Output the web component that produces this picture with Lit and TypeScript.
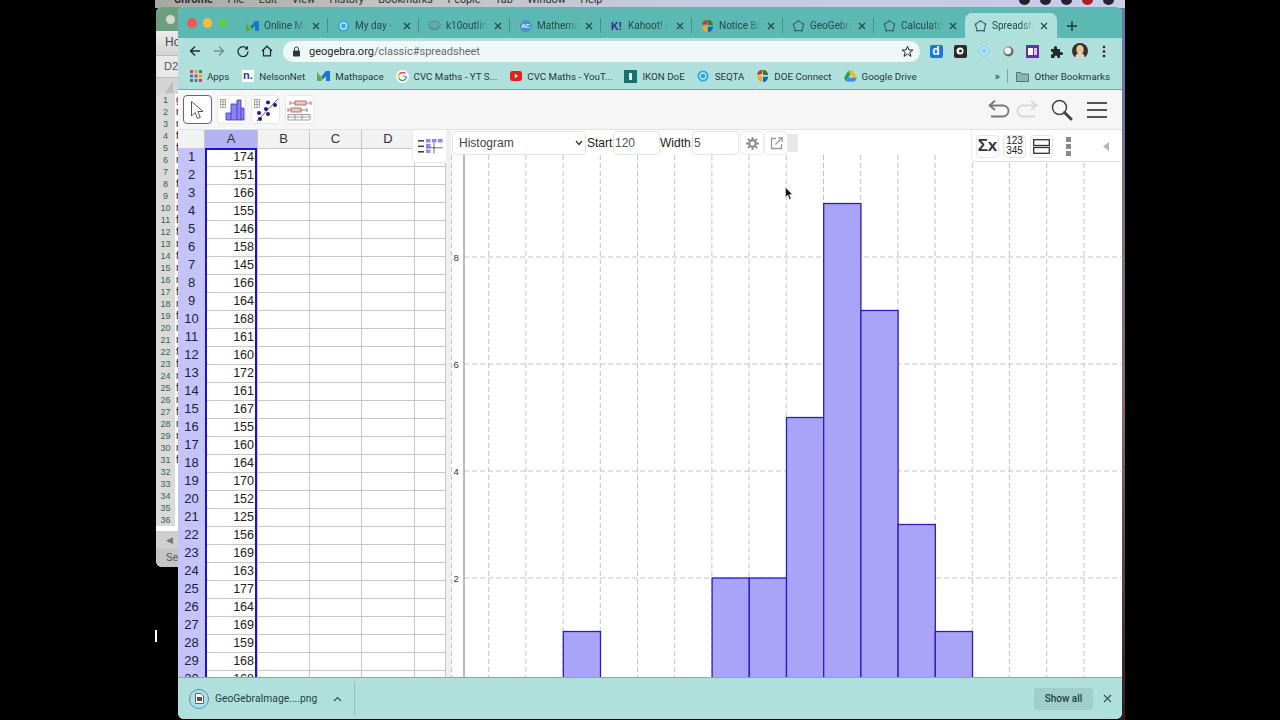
import { LitElement, html, css, svg } from "lit";
import { customElement } from "lit/decorators.js";

const VALUES = [174,151,166,155,146,158,145,166,164,168,161,160,172,161,167,155,160,164,170,152,125,156,169,163,177,164,169,159,168,168];
const XL_LETTERS = "grrffrrfrrffrfrrfrfrrffrfrfrrrf";

const pentagon = svg`<svg width="14" height="14" viewBox="0 0 14 14"><path d="M7 1.500 12.500 5 10.800 12 3.400 12 1.500 5.200Z" fill="none" stroke="#3f5f78" stroke-width="1.200"/><circle cx="7" cy="1.800" r="1" fill="#3f5f78"/><circle cx="12.300" cy="5" r="1" fill="#3f5f78"/><circle cx="1.700" cy="5.200" r="1" fill="#3f5f78"/><circle cx="3.500" cy="12" r="1" fill="#3f5f78"/><circle cx="10.800" cy="12" r="1" fill="#3f5f78"/></svg>`;
const msIcon = svg`<svg width="13" height="12" viewBox="0 0 13 12"><path d="M0 11V2l4 5V11Z" fill="#4caf50"/><path d="M4 7 9 1h4v10H9V6L6.500 9Z" fill="#1976d2"/><path d="M0 2 4 7 6.500 9 4 11Z" fill="#7cb342"/></svg>`;
const seqta = svg`<svg width="12" height="12" viewBox="0 0 12 12"><circle cx="6" cy="6" r="5.500" fill="#29a8df"/><circle cx="6" cy="6" r="3" fill="none" stroke="#bfe9f7" stroke-width="1.300"/></svg>`;
const doe = svg`<svg width="13" height="14" viewBox="0 0 13 14"><path d="M6.500 1C3 1 1 3 1.500 6L6 5Z" fill="#d32f2f"/><path d="M7 1c3 0 5 2 5 5L7 6Z" fill="#2e7d32"/><path d="M1.500 7 6.500 7 6 13C3 13 1.500 10 1.500 7Z" fill="#f9a825"/><path d="M7 8l5-.5C12 11 10 13 7 13Z" fill="#1565c0"/></svg>`;

const tabs = [
  { t: "Online Mathspace", i: msIcon },
  { t: "My day - To Do", i: svg`<svg width="14" height="14" viewBox="0 0 14 14"><circle cx="7" cy="7" r="6" fill="#35a6e8"/><circle cx="7" cy="7" r="3.300" fill="none" stroke="#cdeefb" stroke-width="1.300"/></svg>` },
  { t: "k10outline", i: svg`<svg width="14" height="12" viewBox="0 0 14 12"><ellipse cx="7" cy="5" rx="6.300" ry="4.200" fill="#6aa9a7" stroke="#4c8d8b"/><path d="M3 6v3c2 1.500 6 1.500 8 0V6" fill="none" stroke="#4c8d8b"/></svg>` },
  { t: "Mathematics", i: svg`<svg width="14" height="14" viewBox="0 0 14 14"><circle cx="7" cy="7" r="6.500" fill="#3d96d8"/><path d="M1 10A6.500 6.500 0 0 1 3 2" fill="none" stroke="#d99a4a" stroke-width="1.200"/><text x="7" y="9.500" font-size="6.500" font-weight="700" text-anchor="middle" fill="#fff" font-family="Liberation Sans">AC</text></svg>` },
  { t: "Kahoot! - ", i: html`<span class="kahoot">K!</span>` },
  { t: "Notice Board", i: doe },
  { t: "GeoGebra", i: pentagon },
  { t: "Calculator", i: pentagon },
];

const bookmarks = [
  { t: "Apps", i: svg`<svg width="12" height="12" viewBox="0 0 12 12">${[["#d9453a",0,0],["#e8a32c",4.500,0],["#3b8a46",9,0],["#3a78d8",0,4.500],["#d9453a",4.500,4.500],["#e8a32c",9,4.500],["#3b8a46",0,9],["#3a78d8",4.500,9],["#d9453a",9,9]].map((d) => svg`<rect x="${d[1]}" y="${d[2]}" width="3" height="3" fill="${d[0]}"/>`)}</svg>` },
  { t: "NelsonNet", i: html`<span class="nelson">n.</span>` },
  { t: "Mathspace", i: msIcon },
  { t: "CVC Maths - YT S...", i: svg`<svg width="13" height="13" viewBox="0 0 13 13"><circle cx="6.500" cy="6.500" r="6.500" fill="#fff"/><path d="M10.300 6.800H6.800V5.700h3.500" fill="#4285f4"/><path d="M9.400 3.600A4 4 0 0 0 3.200 4.500" fill="none" stroke="#ea4335" stroke-width="1.400"/><path d="M3 4.400a4 4 0 0 0 0 4" fill="none" stroke="#fbbc05" stroke-width="1.400"/><path d="M3 8.400a4 4 0 0 0 6.400.8" fill="none" stroke="#34a853" stroke-width="1.400"/><path d="M9.300 9.300a3.800 3.800 0 0 0 1-2.600" fill="none" stroke="#4285f4" stroke-width="1.400"/></svg>` },
  { t: "CVC Maths - YouT...", i: svg`<svg width="12" height="10" viewBox="0 0 12 10"><rect width="12" height="10" rx="2.200" fill="#e3201b"/><path d="M4.800 2.800 8 5 4.800 7.200Z" fill="#fff"/></svg>` },
  { t: "IKON DoE", i: svg`<svg width="13" height="13" viewBox="0 0 13 13"><rect width="13" height="13" fill="#19716f"/><rect x="5" y="3" width="3" height="7" fill="#e8f4f2"/></svg>` },
  { t: "SEQTA", i: seqta },
  { t: "DOE Connect", i: doe },
  { t: "Google Drive", i: svg`<svg width="14" height="12" viewBox="0 0 14 12"><path d="M4.700 0H9.300L14 8H9.400Z" fill="#f6bb18"/><path d="M4.700 0 0 8l2.300 4L7 4Z" fill="#1fa463"/><path d="M2.300 12H11.700L14 8H4.700Z" fill="#4285f4"/></svg>` },
];

const toolbarExt = [
  html`<span class="ext-d">d</span>`,
  svg`<svg width="13" height="13" viewBox="0 0 13 13"><rect width="13" height="13" rx="2" fill="#2b2b2b"/><circle cx="6" cy="6" r="3.500" fill="#fff"/><circle cx="6.500" cy="6" r="1.500" fill="#2b2b2b"/></svg>`,
  svg`<svg width="14" height="14" viewBox="0 0 14 14"><rect x="2.500" y="2.500" width="9" height="9" transform="rotate(45 7 7)" fill="#7fd0f5"/><rect x="4.200" y="4.200" width="5.600" height="5.600" transform="rotate(45 7 7)" fill="none" stroke="#e8f8ff"/></svg>`,
  svg`<svg width="13" height="13" viewBox="0 0 13 13"><circle cx="6.500" cy="6.500" r="5" fill="#666"/><circle cx="5.800" cy="5.800" r="3.500" fill="#eee"/></svg>`,
  svg`<svg width="13" height="13" viewBox="0 0 13 13"><rect width="13" height="13" fill="#6a2bb0"/><rect x="2" y="3" width="5" height="7" fill="#fff"/><rect x="8" y="3" width="3" height="7" fill="#d9c4f0"/></svg>`,
  svg`<svg width="13" height="13" viewBox="0 0 13 13"><path d="M1 4h3V2.500a1.500 1.500 0 0 1 3 0V4h3v3h1.500a1.500 1.500 0 0 1 0 3H10v3H7.500v-1a1.500 1.500 0 0 0-3 0v1H1V9.500h.5a1.500 1.500 0 0 0 0-3H1Z" fill="#1d2b2a"/></svg>`,
  svg`<svg width="16" height="16" viewBox="0 0 16 16"><circle cx="8" cy="8" r="8" fill="#3a2f28"/><ellipse cx="8" cy="6.500" rx="3.600" ry="4.500" fill="#e4c59a"/><path d="M3 16c0-4 2-6 5-6s5 2 5 6Z" fill="#d8d4cc"/></svg>`,
  svg`<svg width="4" height="13" viewBox="0 0 4 13"><circle cx="2" cy="2" r="1.300" fill="#223"/><circle cx="2" cy="6.500" r="1.300" fill="#223"/><circle cx="2" cy="11" r="1.300" fill="#223"/></svg>`,
];

const BAR_LEFT = 112.3;
const UNIT_X = 37.2;
const bars = [{ k: 0, h: 1 }, { k: 4, h: 2 }, { k: 5, h: 2 }, { k: 6, h: 5 }, { k: 7, h: 9 }, { k: 8, h: 7 }, { k: 9, h: 3 }, { k: 10, h: 1 }];
const Y0 = 555;
const UNIT_Y = 53.5;

@customElement("app-root")
export class AppRoot extends LitElement {
  static styles = css`
    :host { display: block; width: 1280px; height: 720px; position: relative; overflow: hidden; background: #000; font-family: "Liberation Sans", Arial, sans-serif; }
    .menubar { position: absolute; left: 155px; top: 0; width: 970px; height: 8px; overflow: hidden; background: linear-gradient(90deg, #a9a7a2 0%, #c7c3c0 25%, #c9c8e2 55%, #c8cde8 100%); }
    .menu-items { display: flex; font: 400 10.800px "Roboto", sans-serif; color: #2b2b30; margin-top: -9px; padding-left: 19px; height: 16px; align-items: center; white-space: nowrap; }
    .menu-items span { margin-right: 14.500px; }
    .menu-items .appname { font-weight: 700; font-size: 11px; }
    .tray { position: absolute; top: -5px; left: 864px; display: flex; gap: 10px; align-items: center; }
    .tray i { display: block; width: 11px; height: 10px; border-radius: 50%; background: #23232e; }
    .tray i.red { background: #b31b2b; }
    .strip { position: absolute; left: 1120px; top: 8px; width: 5px; height: 712px; background: linear-gradient(180deg, #6b78a8 0%, #77708a 25%, #8a6a70 55%, #2c1c22 100%); }
    .spot { position: absolute; left: 155px; top: 630px; width: 2px; height: 12px; background: #fff; }

    .excel { position: absolute; left: 156px; top: 7px; width: 30px; height: 560px; border-radius: 6px 0 0 6px; overflow: hidden; background: #dcdcdc; display: flex; flex-direction: column; }
    .xl-title { height: 24px; background: #6b9f80; display: flex; align-items: center; padding-left: 10px; flex: none; }
    .xl-title i { display: block; width: 9px; height: 9px; border-radius: 50%; background: #d5d8d2; }
    .xl-ribbon { height: 24px; flex: none; background: linear-gradient(#ececec, #d4d4d4); font-size: 12px; color: #444; padding: 4px 0 0 9px; box-sizing: border-box; }
    .xl-name { height: 22px; flex: none; background: #e8e8e8; border-top: 1px solid #bbb; box-sizing: border-box; font-size: 11px; color: #555; padding: 4px 0 0 8px; }
    .xl-corner { height: 17px; flex: none; background: #d4d4d4; border-top: 1px solid #bbb; box-sizing: border-box; padding: 3px 0 0 9px; }
    .xl-corner svg { display: block; }
    .xl-rows { flex: 1; background: #fff; }
    .xl-row { height: 12px; display: flex; font-size: 9px; line-height: 12px; color: #33664d; }
    .xl-row b { width: 19px; text-align: center; font-weight: 400; background: #dadada; }
    .xl-row em { font-style: normal; color: #111; font-size: 10px; padding-left: 1px; background: #fff; flex: 1; }
    .xl-scroll { height: 18px; flex: none; background: #cfcfcf; font-size: 9px; color: #777; padding: 4px 0 0 10px; box-sizing: border-box; }
    .xl-tab { height: 18px; flex: none; background: #c4c4c4; font-size: 10px; color: #555; padding: 3px 0 0 10px; box-sizing: border-box; }

    .chrome { position: absolute; left: 178px; top: 7px; width: 944px; height: 712px; display: flex; flex-direction: column; border-radius: 6px; overflow: hidden; background: #fff; font-family: "Roboto", "Liberation Sans", sans-serif; }
    .tabstrip { height: 31px; flex: none; background: #5bb8b3; display: flex; align-items: flex-end; position: relative; padding-left: 59px; }
    .lights { position: absolute; left: 9px; top: 11px; display: flex; gap: 6px; }
    .lights i { display: block; width: 9.500px; height: 9.500px; border-radius: 50%; }
    .tab { width: 91px; height: 25px; flex: none; box-sizing: border-box; padding-left: 9px; display: flex; align-items: center; font-size: 10px; color: #234c4a; position: relative; }
    .tab .ic { width: 13px; height: 14px; flex: none; display: flex; align-items: center; justify-content: center; }
    .tab .lbl { width: 42px; margin-left: 5px; overflow: hidden; white-space: nowrap; -webkit-mask-image: linear-gradient(90deg, #000 70%, transparent 100%); mask-image: linear-gradient(90deg, #000 70%, transparent 100%); }
    .tab .x { margin-left: 5px; width: 10px; height: 10px; display: block; flex: none; }
    .tab::after { content: ""; position: absolute; right: 0; top: 5px; height: 15px; width: 1px; background: #41908b; }
    .tab:nth-child(n+9)::after { display: none; }
    .tab.active { background: #b0e0dc; border-radius: 7px 7px 0 0; width: 92px; }
    .tab.active::after { display: none; }
    .plus { margin-left: 9px; height: 25px; width: 14px; display: flex; align-items: center; }
    .kahoot { font: 700 10.500px "Liberation Sans", sans-serif; color: #3b1f8f; }

    .toolbar { height: 25px; flex: none; box-sizing: border-box; background: #b0e0dc; display: flex; align-items: center; padding: 1px 0 0 5px; }
    .tb { width: 24px; height: 24px; display: flex; align-items: center; justify-content: center; flex: none; }
    .omni { width: 637px; height: 21px; margin: 0 4px; background: #eef8f7; border-radius: 11px; display: flex; align-items: center; flex: none; font-size: 11px; color: #5c6f6e; padding-left: 9px; box-sizing: border-box; }
    .omni .url { margin-left: 8px; flex: 1; }
    .omni .url b { font-weight: 400; color: #1d2b2a; }
    .omni .star { margin-right: 6px; display: block; }
    .ext-d { width: 13px; height: 13px; background: #1b77e0; color: #fff; border-radius: 2px; font: 700 12px/12px "Liberation Sans", sans-serif; text-align: center; display: block; }

    .bmbar { height: 27px; box-sizing: border-box; border-bottom: 1px solid #7fa5a2; flex: none; background: #b0e0dc; display: flex; align-items: center; padding-left: 11px; font-size: 9.750px; color: #1f3a39; white-space: nowrap; }
    .bm { display: flex; align-items: center; margin-right: 12px; }
    .bm .ic { width: 13px; height: 14px; display: flex; align-items: center; justify-content: center; margin-right: 5px; flex: none; }
    .nelson { width: 12px; height: 12px; background: #fff; color: #1a3a8a; font: 700 11px/11px "Liberation Sans", sans-serif; text-align: center; border-radius: 1px; display: block; }
    .bm-end { margin-left: auto; display: flex; align-items: center; padding-right: 12px; }
    .chev { font-size: 11px; margin-right: 7px; }
    .bm-sep { width: 1px; height: 14px; background: #7fa5a2; margin-right: 8px; }
    .bm-end svg { margin-right: 6px; display: block; }

    .app { flex: 1; display: flex; flex-direction: column; min-height: 0; }
    .appbar { height: 40px; flex: none; box-sizing: border-box; background: #f6f6f6; border-bottom: 1px solid #e2e2e2; display: flex; align-items: center; padding: 0 15px 0 5px; }
    .tool { width: 29px; height: 29px; background: #fff; border: 1px solid #e8e8e8; border-radius: 4px; box-sizing: border-box; margin-right: 5px; display: flex; align-items: center; justify-content: center; }
    .tool.on { border: 1.500px solid #6557d2; }
    .appbar .right { margin-left: auto; display: flex; align-items: center; gap: 0; }
    .appbar .right svg { display: block; }
    .appbar .right .redo { margin-left: 6px; }
    .appbar .right .search { margin-left: 13px; }
    .appbar .right .menu { margin-left: 14px; }

    .main { flex: 1; display: flex; min-height: 0; }
    .sheet { width: 268px; flex: none; position: relative; overflow: hidden; font-family: "Liberation Sans", sans-serif; background: #fff; }
    .row { display: grid; grid-template-columns: 27px 53px 52px 52px 53px 31px; height: 18px; }
    .c { border-right: 1px solid #c6c6c6; border-bottom: 1px solid #c6c6c6; box-sizing: border-box; font-size: 12.500px; line-height: 18px; color: #222; text-align: right; padding-right: 3px; }
    .hd { background: #f2f2f2; text-align: center; padding: 0; font-size: 13px; color: #333; }
    .hd.sel { background: #b4b2f4; }
    .rh { background: #c5c3fb; text-align: center; padding: 0; font-size: 13px; color: #223; border-bottom-color: #dcdcf6; border-right: none; }
    .sel-col { position: absolute; left: 27px; top: 18px; bottom: -4px; width: 52px; border: 2.500px solid #1d12d4; box-sizing: border-box; pointer-events: none; }
    .stylebtn { position: absolute; right: 0; top: 0; width: 34px; height: 33px; background: #fff; box-sizing: border-box; border-left: 1px solid #ececec; border-bottom: 1px solid #ececec; border-radius: 0 0 0 4px; display: flex; align-items: center; justify-content: center; }

    .split { width: 5px; flex: none; background: #f0f0f0; }
    .graph { flex: 1; position: relative; background: #fff; overflow: hidden; font-family: "Liberation Sans", sans-serif; }
    .plot { position: absolute; left: 0; top: 0; display: block; }
    .gbar { position: absolute; left: 1px; top: 1px; height: 24px; display: flex; align-items: stretch; font-size: 12px; color: #222; }
    .select { width: 134px; box-sizing: border-box; background: #fff; border: 1px solid #e4e4e4; border-radius: 4px; display: flex; align-items: center; justify-content: space-between; padding: 0 2px 0 6px; color: #444; }
    .glabel { display: flex; align-items: center; background: #fff; white-space: nowrap; }
    .glabel.start { width: 26px; margin-left: 1px; }
    .glabel.width { width: 32px; }
    .ginput { width: 47px; box-sizing: border-box; border: 1px solid #e4e4e4; border-radius: 4px; background: #fff; display: flex; align-items: center; padding-left: 1px; color: #555; }
    .gbtn { width: 24px; box-sizing: border-box; border: 1px solid #ececec; border-radius: 4px; background: #fff; display: flex; align-items: center; justify-content: center; }
    .gbtn.first { margin-left: 1px; }
    .gstub { width: 10px; margin: 3px 0; background: #e8e8e8; }
    .rpanel { position: absolute; right: 1px; top: 0; width: 150px; height: 32px; box-sizing: border-box; background: #fff; border-left: 1px solid #ececec; border-bottom: 1px solid #e0e0e0; border-radius: 0 0 0 4px; display: flex; align-items: center; padding: 1px 0 0 4px; }
    .rbtn { width: 23px; height: 23px; box-sizing: border-box; border: 1px solid #e6e6e6; border-radius: 4px; margin-right: 4px; display: flex; align-items: center; justify-content: center; font: 400 10px/10px "Liberation Sans", sans-serif; color: #222; text-align: center; }
    .rbtn.sig { font-size: 17px; color: #333; font-weight: 700; }
    .rpanel .dots { margin-left: 9px; display: block; }
    .rpanel .tri { margin-left: 32px; display: block; }
    .cursor { position: absolute; left: 334px; top: 57px; display: block; }

    .dl { height: 42px; flex: none; box-sizing: border-box; background: #b0e0dc; border-top: 1px solid #86aaa8; display: flex; align-items: center; padding: 0 10px 0 11px; font-size: 10.300px; color: #23403f; }
    .dl-ic { width: 20px; height: 20px; box-sizing: border-box; border: 1.500px solid #4a90d9; border-radius: 50%; display: flex; align-items: center; justify-content: center; margin-right: 6px; }
    .dl-sep { width: 1px; height: 33px; background: #93bdba; margin-left: 12px; }
    .dl .chv { margin-left: 16px; display: block; }
    .showall { margin-left: auto; width: 59px; height: 22px; background: #a0cfcb; border-radius: 3px; display: flex; align-items: center; justify-content: center; font-size: 10px; font-weight: 500; }
    .dl .close { margin-left: 10px; display: block; }
  `;

  private xIcon(color = "#234c4a") {
    return html`<svg class="x" viewBox="0 0 10 10"><path d="M2 2 8 8M8 2 2 8" stroke="${color}" stroke-width="1.300"/></svg>`;
  }

  private plot() {
    const xs: number[] = [];
    for (let k = 0; k < 18; k++) xs.push(0.5 + UNIT_X * k);
    const ys = [8, 6, 4, 2];
    return svg`<svg class="plot" width="670" height="547" viewBox="0 0 670 547">
      ${xs.map((x) => svg`<line x1="${x}" x2="${x}" y1="25" y2="547" stroke="#c4c4c4" stroke-dasharray="5 3"/>`)}
      ${ys.map((v) => svg`<line x1="13" x2="670" y1="${Y0 - v * UNIT_Y}" y2="${Y0 - v * UNIT_Y}" stroke="#c4c4c4" stroke-dasharray="5 3"/>`)}
      <line x1="13" x2="13" y1="25" y2="547" stroke="#a6a6a6" stroke-width="1.500"/>
      ${ys.map((v) => svg`<text x="2.500" y="${Y0 - v * UNIT_Y + 3.500}" font-size="9.500" fill="#333" font-family="Liberation Sans">${v}</text>`)}
      ${bars.map((b) => svg`<rect x="${BAR_LEFT + UNIT_X * b.k}" y="${Y0 - b.h * UNIT_Y}" width="${UNIT_X}" height="${b.h * UNIT_Y}" fill="#a9a4f8" stroke="#2b1dc2" stroke-width="1.300"/>`)}
    </svg>`;
  }

  render() {
    return html`
      <div class="menubar">
        <div class="menu-items">
          <span class="appname">Chrome</span><span>File</span><span>Edit</span><span>View</span><span>History</span><span>Bookmarks</span><span>People</span><span>Tab</span><span>Window</span><span>Help</span>
        </div>
        <div class="tray"><i></i><i></i><i></i><i class="red"></i><i></i></div>
      </div>
      <div class="strip"></div>
      <div class="spot"></div>

      <div class="excel">
        <div class="xl-title"><i></i></div>
        <div class="xl-ribbon">Ho</div>
        <div class="xl-name">D2</div>
        <div class="xl-corner"><svg width="8" height="12" viewBox="0 0 8 12"><path d="M8 0V12H0Z" fill="#bdbdbd"/></svg></div>
        <div class="xl-rows">
          ${Array.from({ length: 36 }, (_, i) => html`<div class="xl-row"><b>${i + 1}</b><em>${XL_LETTERS[i] ?? ""}</em></div>`)}
        </div>
        <div class="xl-scroll">◀</div>
        <div class="xl-tab">Se</div>
      </div>

      <div class="chrome">
        <div class="tabstrip">
          <div class="lights"><i style="background:#ed5a5a"></i><i style="background:#f3bb3f"></i><i style="background:#5ccb5f"></i></div>
          ${tabs.map((t) => html`<div class="tab"><span class="ic">${t.i}</span><span class="lbl">${t.t}</span>${this.xIcon()}</div>`)}
          <div class="tab active"><span class="ic">${pentagon}</span><span class="lbl">Spreadsheet</span>${this.xIcon()}</div>
          <div class="plus"><svg width="12" height="12" viewBox="0 0 12 12"><path d="M6 1v10M1 6h10" stroke="#1d3534" stroke-width="1.400"/></svg></div>
        </div>

        <div class="toolbar">
          <span class="tb"><svg width="12" height="12" viewBox="0 0 12 12"><path d="M11 6H1.500M6 1.500 1.500 6 6 10.500" fill="none" stroke="#1d2b2a" stroke-width="1.300"/></svg></span>
          <span class="tb"><svg width="12" height="12" viewBox="0 0 12 12"><path d="M1 6h9.500M6 1.500 10.500 6 6 10.500" fill="none" stroke="#6f8f8d" stroke-width="1.300"/></svg></span>
          <span class="tb"><svg width="12" height="12" viewBox="0 0 12 12"><path d="M10.300 4A5 5 0 1 0 11 6.500" fill="none" stroke="#1d2b2a" stroke-width="1.300"/><path d="M11 .8V4.500H7.300Z" fill="#1d2b2a"/></svg></span>
          <span class="tb"><svg width="12" height="12" viewBox="0 0 12 12"><path d="M1 6 6 1.200 11 6M2.500 5v5.800h7V5" fill="none" stroke="#1d2b2a" stroke-width="1.200"/></svg></span>
          <div class="omni">
            <svg width="9" height="11" viewBox="0 0 9 11"><rect x="1" y="4.500" width="7" height="6" rx="1" fill="#2b3938"/><path d="M2.500 4.500V3a2 2 0 0 1 4 0v1.500" fill="none" stroke="#2b3938"/></svg>
            <span class="url"><b>geogebra.org</b>/classic#spreadsheet</span>
            <svg class="star" width="13" height="13" viewBox="0 0 13 13"><path d="M6.500 1.300 8 5h3.900L8.800 7.400 10 11.400 6.500 9 3 11.400 4.200 7.400 1.100 5H5Z" fill="none" stroke="#1d2b2a"/></svg>
          </div>
          ${toolbarExt.map((e) => html`<span class="tb">${e}</span>`)}
        </div>

        <div class="bmbar">
          ${bookmarks.map((b) => html`<div class="bm"><span class="ic">${b.i}</span>${b.t}</div>`)}
          <div class="bm-end">
            <span class="chev">»</span>
            <span class="bm-sep"></span>
            <svg width="13" height="11" viewBox="0 0 13 11"><path d="M.5 1.500h4l1 1.500h7v7.500H.5Z" fill="#8cb3b0" stroke="#4f7371"/></svg>
            <span>Other Bookmarks</span>
          </div>
        </div>

        <div class="app">
          <div class="appbar">
            <div class="tool on"><svg width="15" height="20" viewBox="0 0 15 20"><path d="M1.500 1.500V16l3.500-3.500 2.500 6 2.800-1.200-2.500-5.800H13Z" fill="#fff" stroke="#555" stroke-width="1"/></svg></div>
            <div class="tool"><svg width="26" height="24" viewBox="0 0 26 24"><g fill="none" stroke="#888" stroke-width=".7"><rect x="1.500" y="1.500" width="5" height="8"/><path d="M1.500 4h5M1.500 6.500h5M4 1.500v8"/></g><path d="M7 22V15H12V6H18V2H22V10H25V22Z" fill="#8a82f0" stroke="#3d2fc8" stroke-width=".8"/><path d="M12 15V22M18 6V22M22 10V22" stroke="#3d2fc8" stroke-width=".8"/></svg></div>
            <div class="tool"><svg width="26" height="24" viewBox="0 0 26 24"><g fill="none" stroke="#888" stroke-width=".7"><rect x="1.500" y="1.500" width="5" height="8"/><path d="M1.500 4h5M1.500 6.500h5M4 1.500v8"/></g><path d="M4 23 25 1" stroke="#b03a4a"/><circle cx="15" cy="4.500" r="2" fill="#1d1a8c"/><circle cx="22" cy="7" r="2" fill="#1d1a8c"/><circle cx="13" cy="11" r="2" fill="#1d1a8c"/><circle cx="6" cy="15" r="2" fill="#1d1a8c"/><circle cx="15" cy="16" r="2" fill="#1d1a8c"/><circle cx="7" cy="21" r="2" fill="#1d1a8c"/></svg></div>
            <div class="tool"><svg width="26" height="22" viewBox="0 0 26 22"><g fill="none" stroke="#a05a5a" stroke-width=".8"><path d="M3 4h21M3 2v4M24 2v4"/><rect x="8" y="2" width="11" height="4" fill="#ecc8b8"/><path d="M1 11h19M1 9v4M20 9v4"/><rect x="4" y="9" width="10" height="4" fill="#ecc8b8"/></g><g fill="none" stroke="#888" stroke-width=".8"><rect x="1" y="15.500" width="22" height="5.500"/><path d="M8 15.500v5.500M15 15.500v5.500M1 18h22"/></g></svg></div>
            <div class="right">
              <svg width="22" height="20" viewBox="0 0 22 20"><path d="M2 5.500h13a5.500 5.500 0 0 1 0 11H3" fill="none" stroke="#777" stroke-width="1.800"/><path d="M7 .8 1.500 5.500 7 10" fill="none" stroke="#777" stroke-width="1.800"/></svg>
              <svg class="redo" width="22" height="20" viewBox="0 0 22 20"><path d="M20 5.500H7a5.500 5.500 0 0 0 0 11h12" fill="none" stroke="#d8d8d8" stroke-width="1.800"/><path d="M15 .8 20.500 5.500 15 10" fill="none" stroke="#d8d8d8" stroke-width="1.800"/></svg>
              <svg class="search" width="22" height="22" viewBox="0 0 22 22"><circle cx="8.500" cy="8.500" r="7" fill="none" stroke="#444" stroke-width="1.500"/><path d="M13.500 13.500 20 20" stroke="#444" stroke-width="3" stroke-linecap="round"/></svg>
              <svg class="menu" width="20" height="18" viewBox="0 0 20 18"><path d="M0 2h20M0 9h20M0 16h20" stroke="#555" stroke-width="2.200"/></svg>
            </div>
          </div>

          <div class="main">
            <div class="sheet">
              <div class="row">
                <div class="c hd"></div><div class="c hd sel">A</div><div class="c hd">B</div><div class="c hd">C</div><div class="c hd">D</div><div class="c hd"></div>
              </div>
              ${VALUES.map((v, i) => html`<div class="row"><div class="c rh">${i + 1}</div><div class="c">${v}</div><div class="c"></div><div class="c"></div><div class="c"></div><div class="c"></div></div>`)}
              <div class="sel-col"></div>
              <div class="stylebtn"><svg width="26" height="16" viewBox="0 0 26 16"><g fill="#444"><rect x="1" y="2" width="6" height="1.600"/><rect x="1" y="7.500" width="6" height="1.600"/><rect x="1" y="13" width="6" height="1.600"/></g><g fill="#8f8ae8"><rect x="9" y="1" width="4.500" height="3.500"/><rect x="15" y="1" width="4.500" height="3.500"/><rect x="21" y="1" width="4.500" height="3.500"/><rect x="9" y="6" width="4.500" height="3.500"/><rect x="9" y="11.500" width="4.500" height="3.500"/></g><path d="M9 9.800H25.500M17 5V15.500" stroke="#444" stroke-width=".8"/></svg></div>
            </div>
            <div class="split"></div>
            <div class="graph">
              ${this.plot()}
              <div class="gbar">
                <div class="select"><span>Histogram</span><svg width="8" height="6" viewBox="0 0 8 6"><path d="M1 1 4 4.500 7 1" fill="none" stroke="#333" stroke-width="1.300"/></svg></div>
                <span class="glabel start">Start</span>
                <div class="ginput">120</div>
                <span class="glabel width">Width</span>
                <div class="ginput">5</div>
                <div class="gbtn first"><svg width="13" height="13" viewBox="0 0 13 13"><circle cx="6.500" cy="6.500" r="3.300" fill="none" stroke="#8a8a8a" stroke-width="2.200"/><path d="M6.500 0v2.500M6.500 10.500V13M0 6.500h2.500M10.500 6.500H13M1.900 1.900l1.800 1.800M9.300 9.300l1.800 1.800M1.900 11.100l1.800-1.800M9.300 3.700l1.800-1.800" stroke="#8a8a8a" stroke-width="1.800"/></svg></div>
                <div class="gbtn"><svg width="13" height="13" viewBox="0 0 13 13"><path d="M6 1.500H1.500v10h10V7" fill="none" stroke="#999" stroke-width="1.300"/><path d="M5.500 7.500 12 1M8 .8h4.200V5" fill="none" stroke="#999" stroke-width="1.300"/></svg></div>
                <div class="gstub"></div>
              </div>
              <div class="rpanel">
                <div class="rbtn sig">Σx</div>
                <div class="rbtn">123<br />345</div>
                <div class="rbtn"><svg width="17" height="15" viewBox="0 0 17 15"><rect x=".7" y=".7" width="15.600" height="5.800" fill="none" stroke="#333" stroke-width="1.300"/><rect x=".7" y="8.500" width="15.600" height="5.800" fill="none" stroke="#333" stroke-width="1.300"/></svg></div>
                <svg class="dots" width="5" height="19" viewBox="0 0 5 19"><rect width="5" height="5" fill="#8a8a8a"/><rect y="7" width="5" height="5" fill="#8a8a8a"/><rect y="14" width="5" height="5" fill="#8a8a8a"/></svg>
                <svg class="tri" width="6" height="9" viewBox="0 0 6 9"><path d="M6 0V9L0 4.500Z" fill="#b5b5b5"/></svg>
              </div>
              <svg class="cursor" width="8" height="14" viewBox="0 0 8 14"><path d="M.5.500V10L2.800 8 4.500 12.500 6 12 4.400 7.500H7.500Z" fill="#111" stroke="#fff" stroke-width=".4"/></svg>
            </div>
          </div>
        </div>

        <div class="dl">
          <div class="dl-ic"><svg width="9" height="11" viewBox="0 0 9 11"><path d="M.5.500h5.500L8.500 3v7.500H.5Z" fill="#fff" stroke="#666"/><rect x="2" y="4" width="5" height="4" fill="#555"/></svg></div>
          <span>GeoGebraImage....png</span>
          <svg class="chv" width="9" height="6" viewBox="0 0 9 6"><path d="M1 5 4.500 1.500 8 5" fill="none" stroke="#3a5553" stroke-width="1.200"/></svg>
          <span class="dl-sep"></span>
          <div class="showall">Show all</div>
          <svg class="close" width="9" height="9" viewBox="0 0 9 9"><path d="M1 1 8 8M8 1 1 8" stroke="#3a5553" stroke-width="1.200"/></svg>
        </div>
      </div>
    `;
  }
}
